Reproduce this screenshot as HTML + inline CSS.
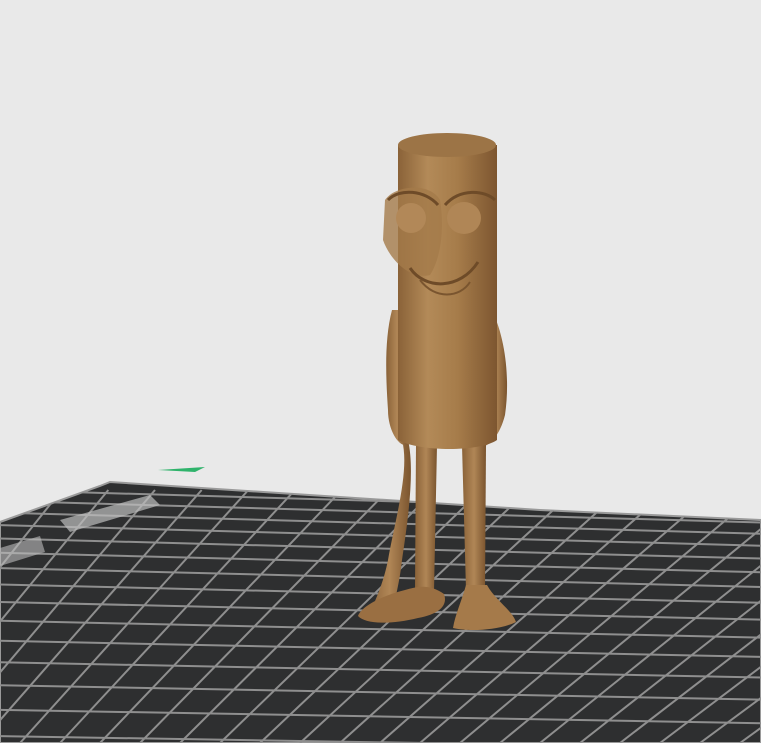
<!DOCTYPE html>
<html><head><style>
html,body{margin:0;padding:0;width:761px;height:743px;overflow:hidden;background:#e9e9e9;font-family:"Liberation Sans",sans-serif}
svg{display:block}
</style></head><body>
<svg id="s" width="761" height="743" viewBox="0 0 761 743">
<defs>
<linearGradient id="b" x1="0" x2="1">
<stop offset="0" stop-color="#8a6238"/><stop offset="0.3" stop-color="#b38a58"/><stop offset="0.6" stop-color="#a67c4a"/><stop offset="1" stop-color="#7d5630"/>
</linearGradient>
<linearGradient id="l" x1="0" x2="1">
<stop offset="0" stop-color="#8a6238"/><stop offset="0.5" stop-color="#b08656"/><stop offset="1" stop-color="#7a542e"/>
</linearGradient>
</defs>
<polygon points="0,522 100,486 110,482 540,510 761,520 761,743 0,743" fill="#2e2f30" stroke="#9a9a9a" stroke-width="2"/>
<g id="g" stroke="#8f8f8f" stroke-width="2"></g>
<polygon points="60,520 150,495 160,505 70,532" fill="#bdbdbd" opacity="0.7"/>
<polygon points="0,548 40,536 45,552 0,566" fill="#bdbdbd" opacity="0.6"/>
<path d="M158 470 L205 467 L195 472 Z" fill="#2fb36b"/>
<!-- cane -->
<path d="M402 440 C410 470 395 520 388 560 C382 590 372 605 368 620 L390 622 C395 600 400 580 402 560 C408 520 415 470 408 440 Z" fill="url(#l)"/>
<!-- arms -->
<path d="M392 310 C384 340 386 380 388 410 C388 430 398 445 405 445 L408 420 C402 390 402 350 404 310 Z" fill="url(#l)"/>
<path d="M492 310 C506 340 510 380 505 415 C500 435 490 445 484 446 L486 420 C494 390 494 350 490 310 Z" fill="url(#l)"/>
<!-- legs -->
<path d="M416 445 L415 590 L434 592 L437 445 Z" fill="url(#l)"/>
<path d="M462 445 L466 590 L485 592 L486 445 Z" fill="url(#l)"/>
<path d="M405 590 C385 595 362 605 358 616 C365 624 390 625 418 618 C440 614 448 605 444 594 C430 584 418 586 405 590 Z" fill="#9a6f42"/>
<path d="M466 585 C462 600 455 615 453 628 C470 632 500 630 516 622 C512 610 495 600 487 585 Z" fill="#a57a4a"/>
<!-- body -->
<path d="M398 145 L398 440 C420 452 480 452 497 440 L497 145 Z" fill="url(#b)"/>
<ellipse cx="447" cy="145" rx="49" ry="12" fill="#9c7446"/>
<!-- face -->
<path d="M385 200 C395 185 430 182 440 200 C445 230 440 260 430 275 C410 280 390 260 383 240 Z" fill="#a47a4a" opacity="0.8"/>
<ellipse cx="411" cy="218" rx="15" ry="15" fill="#b28858"/>
<ellipse cx="464" cy="218" rx="17" ry="16" fill="#b08656"/>
<path d="M388 200 C400 188 425 190 438 205" stroke="#6e4b28" stroke-width="3" fill="none"/>
<path d="M445 205 C460 188 485 190 495 200" stroke="#6e4b28" stroke-width="3" fill="none"/>
<path d="M410 268 C425 290 460 290 478 262" stroke="#6e4b28" stroke-width="3" fill="none"/>
<path d="M420 280 C435 300 460 298 470 282" stroke="#7a552f" stroke-width="2" fill="none"/>
</svg>
<script>
var g=document.getElementById('g'),s='';
// horizontal-ish rows
var y=490,d=10;
while(y<760){s+='<line x1="0" y1="'+(y+(y-490)*0.02)+'" x2="761" y2="'+(y+22-(y-490)*0.02)+'"/>';d*=1.07;y+=d;}
// diagonals
for(var x=-700;x<800;x+=40){var sl=0.9+ (x/1500);s+='<line x1="'+x+'" y1="743" x2="'+(x+250*sl)+'" y2="490"/>';}
g.innerHTML=s;
var c=document.createElementNS('http://www.w3.org/2000/svg','clipPath');
c.id='cp';c.innerHTML='<polygon points="0,522 100,486 110,482 540,510 761,520 761,743 0,743"/>';
document.getElementById('s').appendChild(c);g.setAttribute('clip-path','url(#cp)');
</script>
</body></html>
